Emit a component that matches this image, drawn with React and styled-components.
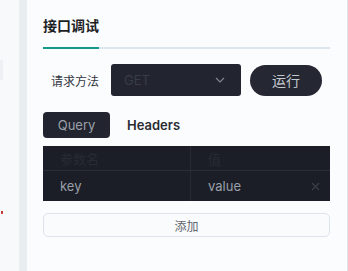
import React from 'react';
import styled, { createGlobalStyle } from 'styled-components';

const GlobalStyle = createGlobalStyle`
  html, body {
    margin: 0;
    padding: 0;
    background: #fbfcfe;
    font-family: "Noto Sans CJK SC", Inter, "Noto Sans", sans-serif;
  }
`;

const Page = styled.div`
  display: flex;
  height: 271px;
  width: 348px;
  overflow: hidden;
`;

const Side = styled.div`
  width: 19px;
  flex-shrink: 0;
  background: #f8f9fb;
  display: flex;
  flex-direction: column;
  padding-top: 60px;
  box-sizing: border-box;
`;

const SideBlock = styled.div`
  width: 3px;
  height: 20px;
  background: #eef0f3;
`;

const SideMark = styled.div`
  width: 2px;
  height: 3px;
  margin: 131px 0 0 1px;
  background: #c53a3a;
`;

const Gutter = styled.div`
  width: 8px;
  flex-shrink: 0;
  background: #e8edf0;
`;

const Panel = styled.div`
  flex: 1;
  background: #fbfcfe;
  border-right: 1px solid #dfe5ea;
  padding: 12px 17px 0 16px;
  display: flex;
  flex-direction: column;
`;

const Header = styled.div`
  border-bottom: 2px solid #dde5ee;
`;

const Title = styled.div`
  display: inline-block;
  font-size: 14px;
  font-weight: 700;
  line-height: 20px;
  color: #1d1f24;
  padding-bottom: 12px;
  border-bottom: 2px solid #16998a;
  margin-bottom: -2px;
`;

const MethodRow = styled.div`
  display: flex;
  align-items: center;
  margin-top: 15px;
  padding-left: 8px;
`;

const Label = styled.span`
  font-size: 12px;
  color: #333640;
  width: 48px;
`;

const Select = styled.div`
  width: 130px;
  height: 32px;
  margin-left: 12px;
  box-sizing: border-box;
  background: #22252f;
  border-radius: 3px;
  display: flex;
  align-items: center;
  justify-content: space-between;
  padding: 0 16px 0 13px;
  font-family: Inter, "Noto Sans", sans-serif;
  font-size: 13px;
  color: #383c47;
`;

const RunButton = styled.button`
  width: 72px;
  height: 31px;
  margin-left: 9px;
  border: none;
  border-radius: 16px;
  background: #252833;
  color: #c3c7ce;
  font-family: inherit;
  font-size: 14px;
  padding: 0;
`;

const Tabs = styled.div`
  display: flex;
  align-items: center;
  gap: 17px;
  margin-top: 16px;
`;

const Tab = styled.div`
  height: 26px;
  display: flex;
  align-items: center;
  justify-content: center;
  font-family: Inter, "Noto Sans", sans-serif;
  font-size: 13px;
  border-radius: 4px;
  ${(p) =>
    p.active
      ? `width: 67px; background: #222530; color: #9ba0aa;`
      : `color: #2a2c33; font-weight: 600;`}
`;

const Table = styled.div`
  margin-top: 8px;
  background: #1b1e27;
  display: grid;
  grid-template-columns: 147px 1fr;
`;

const Cell = styled.div`
  height: ${(p) => (p.head ? '25px' : '30px')};
  box-sizing: border-box;
  display: flex;
  align-items: center;
  justify-content: space-between;
  padding: 0 10px 0 17px;
  font-size: 13px;
  font-family: Inter, "Noto Sans CJK SC", sans-serif;
  color: ${(p) => (p.head ? '#272b35' : '#9aa0a8')};
  border-bottom: ${(p) => (p.head ? '1px solid #2a2e39' : 'none')};
  border-left: ${(p) => (p.right ? '1px solid #262a34' : 'none')};
`;

const AddButton = styled.button`
  margin-top: 12px;
  height: 24px;
  border: 1px solid #dce3ec;
  border-radius: 5px;
  background: #fafbfd;
  color: #62656c;
  font-family: inherit;
  font-size: 12px;
  padding: 0;
`;

const Chevron = () => (
  <svg width="10" height="6" viewBox="0 0 10 6" fill="none">
    <path d="M1 1l4 4 4-4" stroke="#80858f" strokeWidth="1.2" />
  </svg>
);

const Close = () => (
  <svg width="9" height="9" viewBox="0 0 9 9" fill="none">
    <path d="M1 1l7 7M8 1L1 8" stroke="#3a3e48" strokeWidth="1.2" />
  </svg>
);

const App = () => (
  <>
    <GlobalStyle />
    <Page>
      <Side>
        <SideBlock />
        <SideMark />
      </Side>
      <Gutter />
      <Panel>
        <Header>
          <Title>接口调试</Title>
        </Header>
        <MethodRow>
          <Label>请求方法</Label>
          <Select>
            GET
            <Chevron />
          </Select>
          <RunButton>运行</RunButton>
        </MethodRow>
        <Tabs>
          <Tab active>Query</Tab>
          <Tab>Headers</Tab>
        </Tabs>
        <Table>
          <Cell head>参数名</Cell>
          <Cell head right>值</Cell>
          <Cell>key</Cell>
          <Cell right>
            value
            <Close />
          </Cell>
        </Table>
        <AddButton>添加</AddButton>
      </Panel>
    </Page>
  </>
);

export default App;
